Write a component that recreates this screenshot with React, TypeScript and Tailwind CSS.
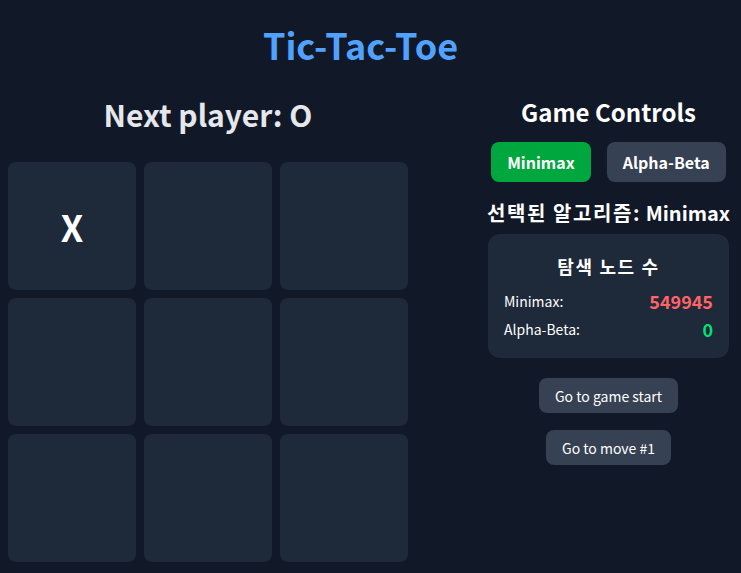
import React, { useState } from 'react';

type Algo = 'Minimax' | 'Alpha-Beta';

const FONT = { fontFamily: '"Noto Sans CJK KR", "Noto Sans", sans-serif' };

export default function App() {
  const [squares] = useState<(string | null)[]>(['X', null, null, null, null, null, null, null, null]);
  const [algo, setAlgo] = useState<Algo>('Minimax');

  return (
    <div className="min-h-screen bg-[#111827] text-white px-2 pt-6" style={FONT}>
      <h1 className="text-center text-4xl font-bold text-[#51a2ff] leading-10 pr-5">Tic-Tac-Toe</h1>

      <div className="flex gap-20 mt-8">
        {/* Board */}
        <div className="w-[400px] flex flex-col items-center">
          <div className="text-3xl font-bold text-[#e5e7eb] leading-9">Next player: O</div>
          <div className="grid grid-cols-3 gap-2 mt-[30px] w-full">
            {squares.map((sq, i) => (
              <button
                key={i}
                className="h-32 rounded-lg bg-[#1e2939] flex items-center justify-center text-4xl font-bold text-white"
              >
                {sq}
              </button>
            ))}
          </div>
        </div>

        {/* Controls */}
        <div className="w-[241px] flex flex-col items-center">
          <h2 className="text-2xl font-bold leading-8">Game Controls</h2>
          <div className="flex gap-4 mt-3.5">
            <button
              onClick={() => setAlgo('Minimax')}
              className={`h-10 px-4 rounded-lg text-base font-bold ${algo === 'Minimax' ? 'bg-[#00a63e]' : 'bg-[#364153]'}`}
            >
              Minimax
            </button>
            <button
              onClick={() => setAlgo('Alpha-Beta')}
              className={`h-10 px-4 rounded-lg text-base font-bold ${algo === 'Alpha-Beta' ? 'bg-[#00a63e]' : 'bg-[#364153]'}`}
            >
              Alpha-Beta
            </button>
          </div>
          <div className="text-xl font-bold leading-7 mt-[17px] whitespace-nowrap">
            <span className="tracking-[0.08em]">선택된 알고리즘:</span> {algo}
          </div>

          <div className="w-full mt-[7px] rounded-xl bg-[#1e2939] px-4 pt-[18px] pb-[15px]">
            <div className="text-lg font-bold text-center leading-7 tracking-[0.09em]">탐색 노드 수</div>
            <div className="flex items-center justify-between mt-[7px] h-7">
              <span className="text-sm">Minimax:</span>
              <span className="text-lg font-bold text-[#ff6467]">549945</span>
            </div>
            <div className="flex items-center justify-between h-7">
              <span className="text-sm">Alpha-Beta:</span>
              <span className="text-lg font-bold text-[#05df72]">0</span>
            </div>
          </div>

          <button className="mt-5 h-[35px] px-4 rounded-lg bg-[#364153] text-sm">Go to game start</button>
          <button className="mt-[17px] h-[35px] px-4 rounded-lg bg-[#364153] text-sm">Go to move #1</button>
        </div>
      </div>
    </div>
  );
}
